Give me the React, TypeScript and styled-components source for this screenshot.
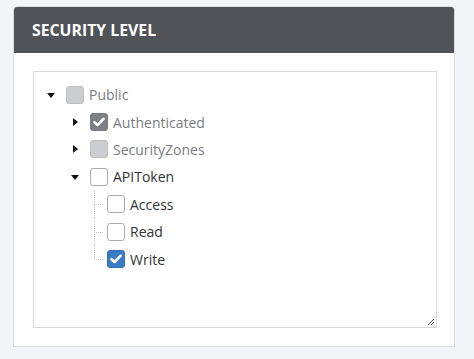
import React from 'react'
import styled, { createGlobalStyle } from 'styled-components'

const GlobalStyle = createGlobalStyle`
  html, body {
    margin: 0;
    padding: 0;
    background: #f3f4f8;
  }
  body {
    font-family: 'Open Sans', 'Noto Sans', sans-serif;
  }
`

const Page = styled.div`
  width: 474px;
  height: 359px;
  padding: 6px 19px 0 13px;
  box-sizing: border-box;
`

const Card = styled.div`
  background: #fff;
  border: 1px solid #dcdde0;
  border-radius: 4px 4px 0 0;
  height: 341px;
  box-sizing: border-box;
  display: flex;
  flex-direction: column;
  overflow: hidden;
`

const Header = styled.div`
  background: #505357;
  height: 46px;
  flex-shrink: 0;
  display: flex;
  align-items: center;
  padding: 0 0 0 18px;
  color: #fff;
  font-weight: 700;
  font-size: 15.8px;
`

const Body = styled.div`
  padding: 18px 17px 18px 19px;
  flex: 1;
  display: flex;
`

const TreeBox = styled.div`
  flex: 1;
  border: 1px solid #d8d8d8;
  position: relative;
  padding: 9px 0 0 9px;
`

const Row = styled.div<{ $level: number }>`
  height: 27.4px;
  display: flex;
  align-items: center;
  padding-left: ${p => p.$level * 24}px;
`

const Toggle = styled.span`
  width: 16px;
  height: 16px;
  display: flex;
  align-items: center;
  justify-content: center;
  margin-right: 7px;
`

const Connector = styled.span<{ $last?: boolean }>`
  position: relative;
  width: 16px;
  height: 100%;
  &:before {
    content: '';
    position: absolute;
    left: 3px;
    top: 0;
    height: ${p => (p.$last ? '50%' : '100%')};
    border-left: 1px dotted #c9c9c9;
  }
  &:after {
    content: '';
    position: absolute;
    left: 3px;
    top: 50%;
    width: 9px;
    border-top: 1px dotted #c9c9c9;
  }
`

type BoxKind = 'empty' | 'grey' | 'greyChecked' | 'checked'

const Box = styled.span<{ $kind: BoxKind }>`
  width: 18px;
  height: 18px;
  box-sizing: border-box;
  border-radius: 3px;
  display: flex;
  align-items: center;
  justify-content: center;
  margin-right: 5px;
  border: 1px solid
    ${p =>
      p.$kind === 'empty'
        ? '#a9abae'
        : p.$kind === 'grey'
        ? '#bdbfc2'
        : p.$kind === 'greyChecked'
        ? '#767a80'
        : '#2f6db5'};
  background: ${p =>
    p.$kind === 'empty'
      ? '#fff'
      : p.$kind === 'grey'
      ? '#cbcdd0'
      : p.$kind === 'greyChecked'
      ? '#7d8187'
      : '#3b7bc6'};
`

const Label = styled.span<{ $muted?: boolean }>`
  font-size: 14px;
  color: ${p => (p.$muted ? '#7a7c80' : '#333')};
  white-space: nowrap;
`

const Grip = styled.svg`
  position: absolute;
  right: 1px;
  bottom: 1px;
`

const Arrow = ({ open }: { open: boolean }) => (
  <svg width="10" height="10" viewBox="0 0 10 10">
    {open ? <path d="M1 3 L9 3 L5 8 Z" fill="#111" /> : <path d="M3 1 L8 5 L3 9 Z" fill="#111" />}
  </svg>
)

const Check = () => (
  <svg width="12" height="10" viewBox="0 0 12 10">
    <path d="M1.5 5.2 L4.5 8 L10.5 1.8" fill="none" stroke="#fff" strokeWidth="2.6" strokeLinecap="round" strokeLinejoin="round" />
  </svg>
)

type Node = {
  label: string
  level: number
  box: BoxKind
  muted?: boolean
  toggle?: 'open' | 'closed'
  last?: boolean
}

const nodes: Node[] = [
  { label: 'Public', level: 0, box: 'grey', muted: true, toggle: 'open' },
  { label: 'Authenticated', level: 1, box: 'greyChecked', muted: true, toggle: 'closed' },
  { label: 'SecurityZones', level: 1, box: 'grey', muted: true, toggle: 'closed' },
  { label: 'APIToken', level: 1, box: 'empty', toggle: 'open' },
  { label: 'Access', level: 2, box: 'empty' },
  { label: 'Read', level: 2, box: 'empty' },
  { label: 'Write', level: 2, box: 'checked', last: true },
]

export default function App() {
  return (
    <>
      <GlobalStyle />
      <Page>
        <Card>
          <Header>SECURITY LEVEL</Header>
          <Body>
            <TreeBox>
              {nodes.map(n => (
                <Row key={n.label} $level={n.level}>
                  {n.toggle ? (
                    <Toggle>
                      <Arrow open={n.toggle === 'open'} />
                    </Toggle>
                  ) : (
                    <Connector $last={n.last} />
                  )}
                  <Box $kind={n.box}>{(n.box === 'checked' || n.box === 'greyChecked') && <Check />}</Box>
                  <Label $muted={n.muted}>{n.label}</Label>
                </Row>
              ))}
              <Grip width="9" height="9" viewBox="0 0 9 9">
                <path d="M8 2 L2 8 M8 5 L5 8" stroke="#555" strokeWidth="1" />
              </Grip>
            </TreeBox>
          </Body>
        </Card>
      </Page>
    </>
  )
}
